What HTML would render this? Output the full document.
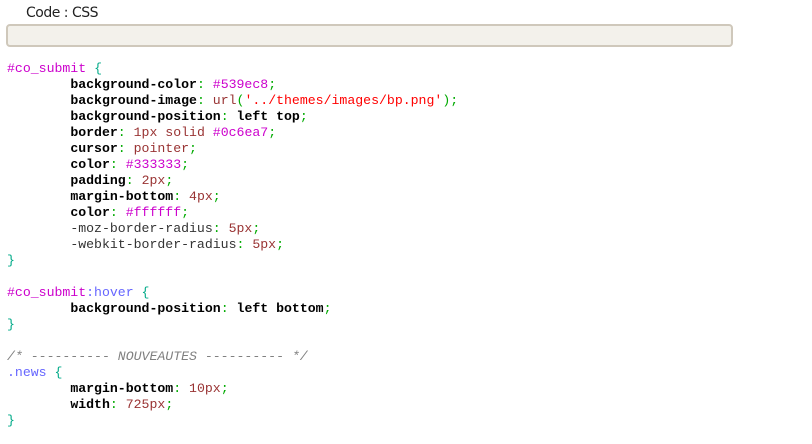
<!DOCTYPE html>
<html><head><meta charset="utf-8"><style>
body{margin:0;background:#fff;width:812px;height:444px;overflow:hidden;}
.lbl{position:absolute;left:26px;top:5px;font:14px "DejaVu Sans","Liberation Sans",sans-serif;letter-spacing:-0.5px;color:#222;}
.box{position:absolute;left:6px;top:24px;width:723px;height:19px;background:#f3f1eb;border:2px solid #cfc8bb;border-radius:4px;}
pre{position:absolute;left:7px;top:61px;margin:0;font:13.2px/16px "Liberation Mono","Courier New",monospace;color:#000;tab-size:8;}
.s{color:#cc00cc}.p{font-weight:bold;color:#000}.g{color:#00aa00}.b{color:#00aa88}
.v{color:#993333}.r{color:#ff0000}.c{color:#808080;font-style:italic}.n{color:#6666ff}.d{color:#333}
</style></head><body>
<div class="lbl">Code : CSS</div>
<div class="box"></div>
<pre><span class="s">#co_submit</span> <span class="b">{</span>
        <span class="p">background-color</span><span class="g">:</span> <span class="s">#539ec8</span><span class="g">;</span>
        <span class="p">background-image</span><span class="g">:</span> <span class="v">url</span><span class="g">(</span><span class="r">'../themes/images/bp.png'</span><span class="g">);</span>
        <span class="p">background-position</span><span class="g">:</span> <span class="p">left top</span><span class="g">;</span>
        <span class="p">border</span><span class="g">:</span> <span class="v">1px solid</span> <span class="s">#0c6ea7</span><span class="g">;</span>
        <span class="p">cursor</span><span class="g">:</span> <span class="v">pointer</span><span class="g">;</span>
        <span class="p">color</span><span class="g">:</span> <span class="s">#333333</span><span class="g">;</span>
        <span class="p">padding</span><span class="g">:</span> <span class="v">2px</span><span class="g">;</span>
        <span class="p">margin-bottom</span><span class="g">:</span> <span class="v">4px</span><span class="g">;</span>
        <span class="p">color</span><span class="g">:</span> <span class="s">#ffffff</span><span class="g">;</span>
        <span class="d">-moz-border-radius</span><span class="g">:</span> <span class="v">5px</span><span class="g">;</span>
        <span class="d">-webkit-border-radius</span><span class="g">:</span> <span class="v">5px</span><span class="g">;</span>
<span class="b">}</span>

<span class="s">#co_submit</span><span class="n">:hover</span> <span class="b">{</span>
        <span class="p">background-position</span><span class="g">:</span> <span class="p">left bottom</span><span class="g">;</span>
<span class="b">}</span>

<span class="c">/* ---------- NOUVEAUTES ---------- */</span>
<span class="n">.news</span> <span class="b">{</span>
        <span class="p">margin-bottom</span><span class="g">:</span> <span class="v">10px</span><span class="g">;</span>
        <span class="p">width</span><span class="g">:</span> <span class="v">725px</span><span class="g">;</span>
<span class="b">}</span></pre>
</body></html>
